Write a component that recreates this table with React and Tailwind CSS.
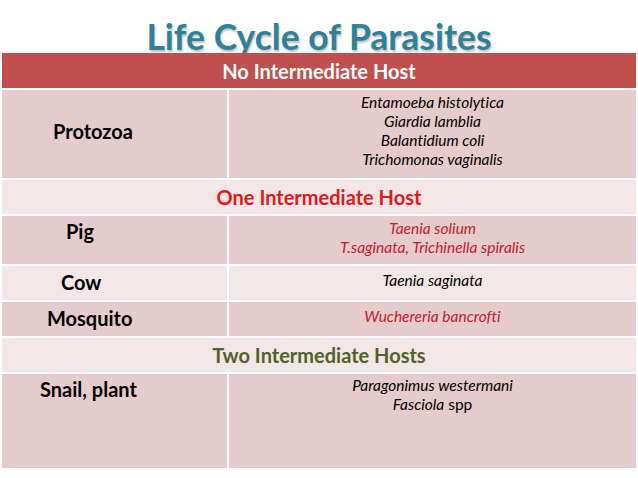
import React from "react";

const font = { fontFamily: "Lato, 'Open Sans', sans-serif" };

const Species = ({ lines, className = "" }) => (
  <div className={"flex flex-col items-center text-[15.5px] leading-[19px] italic " + className}>
    {lines.map((l, i) => (
      <span key={i}>{l}</span>
    ))}
  </div>
);

const Row = ({ label, labelClass, height, bg, rightClass, children }) => (
  <div className={"flex gap-[2px] " + height}>
    <div className={"w-[225px] " + bg}>
      <div className={"text-[20px] font-bold text-black leading-[24px] " + labelClass}>{label}</div>
    </div>
    <div className={"flex-1 " + bg + " " + rightClass}>{children}</div>
  </div>
);

const Section = ({ children, className }) => (
  <div className={"h-[34px] bg-[#f2e6e7] flex items-center justify-center text-[20px] font-bold " + className}>
    {children}
  </div>
);

const App = () => {
  return (
    <div className="w-[638px] h-[478px] bg-white [font-variant-ligatures:none]" style={font}>
      {/* title */}
      <div className="h-[53px] flex items-start justify-center pt-[13px]">
        <h1 className="text-[35.5px] font-bold text-[#2f8199] leading-[48px] [text-shadow:1px_2px_2px_rgba(0,0,0,0.25)]">
          Life Cycle of Parasites
        </h1>
      </div>

      {/* table */}
      <div className="flex flex-col gap-[2px] pl-[2px] pr-[2px]">
        <div className="h-[35px] bg-[#c0504d] flex items-center justify-center text-white text-[20px] font-bold">
          No Intermediate Host
        </div>

        <Row label="Protozoa" labelClass="pl-[51px] pt-[29px]" height="h-[88px]" bg="bg-[#e6cbcc]" rightClass="pt-[3px]">
          <Species
            lines={["Entamoeba histolytica", "Giardia lamblia", "Balantidium coli", "Trichomonas vaginalis"]}
            className="text-black"
          />
        </Row>

        <Section className="text-[#e0191d]">One Intermediate Host</Section>

        <Row label="Pig" labelClass="pl-[64px] pt-[3px]" height="h-[48px]" bg="bg-[#e6cbcc]" rightClass="pt-[3px]">
          <Species lines={["Taenia solium", "T.saginata, Trichinella spiralis"]} className="text-[#c3202a]" />
        </Row>

        <Row label="Cow" labelClass="pl-[59px] pt-[4px]" height="h-[34px]" bg="bg-[#f2e6e7]" rightClass="pt-[5px]">
          <Species lines={["Taenia saginata"]} className="text-black" />
        </Row>

        <Row label="Mosquito" labelClass="pl-[45px] pt-[4px]" height="h-[34px]" bg="bg-[#e6cbcc]" rightClass="pt-[5px]">
          <Species lines={["Wuchereria bancrofti"]} className="text-[#c3202a]" />
        </Row>

        <Section className="text-[#4f6228]">Two Intermediate Hosts</Section>

        <Row label="Snail, plant" labelClass="pl-[38px] pt-[3px]" height="h-[94px]" bg="bg-[#e6cbcc]" rightClass="pt-[2px]">
          <div className="flex flex-col items-center text-[15.5px] leading-[19px] text-black">
            <span className="italic">Paragonimus westermani</span>
            <span>
              <i>Fasciola</i> spp
            </span>
          </div>
        </Row>
      </div>
    </div>
  );
};

export default App;
